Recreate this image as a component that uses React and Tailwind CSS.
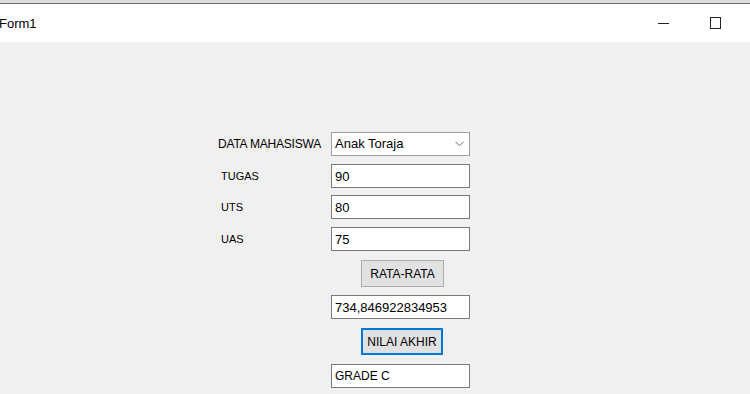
export default function App() {
  const box = "w-[139px] h-[24px] border border-[#7a7a7a] bg-white flex items-center pl-[3px] text-black leading-none";
  return (
    <div className="w-[750px] h-[394px] bg-[#f0f0f0] overflow-hidden font-['Liberation_Sans',Arial,sans-serif] text-black">
      <div className="h-[3px] bg-[#dcdcdc]" />
      <div className="h-[1px] bg-[#6a6a6a]" />
      <div className="h-[38px] bg-white flex items-center">
        <span className="ml-[-1px] text-[13px] leading-none text-black">Form1</span>
        <div className="flex-1" />
        <div className="w-[52px] h-full flex items-center justify-center">
          <div className="w-[11px] h-[1px] bg-[#222]" />
        </div>
        <div className="w-[52px] h-full flex items-center justify-center">
          <div className="w-[11px] h-[12px] border border-[#222]" />
        </div>
        <div className="w-[9px]" />
      </div>
      <div className="pt-[90px] pl-[218px] flex flex-col text-[11px]">
        <div className="flex items-center h-[24px]">
          <div className="w-[113px] text-[12px] tracking-[-0.2px]">DATA MAHASISWA</div>
          <div className="w-[139px] h-[24px] border border-[#a0a0a0] bg-white flex items-center pl-[3px] text-[13px]">
            <span className="flex-1">Anak Toraja</span>
            <svg width="9" height="6" viewBox="0 0 9 6" className="mr-[5px]">
              <path d="M0.5 0.8 L4.5 4.8 L8.5 0.8" fill="none" stroke="#666" strokeWidth="1" />
            </svg>
          </div>
        </div>
        <div className="flex items-center h-[24px] mt-[8px]">
          <div className="w-[113px] pl-[3px]">TUGAS</div>
          <div className={box + " text-[13px]"}>90</div>
        </div>
        <div className="flex items-center h-[24px] mt-[7px]">
          <div className="w-[113px] pl-[3px]">UTS</div>
          <div className={box + " text-[13px]"}>80</div>
        </div>
        <div className="flex items-center h-[24px] mt-[8px]">
          <div className="w-[113px] pl-[3px]">UAS</div>
          <div className={box + " text-[13px]"}>75</div>
        </div>
        <div className="flex mt-[9px] pl-[143px]">
          <div className="w-[83px] h-[27px] bg-[#e1e1e1] border border-[#adadad] flex items-center justify-center text-[12px]">RATA-RATA</div>
        </div>
        <div className="flex mt-[8px] pl-[113px]">
          <div className={box + " text-[13px]"}>734,846922834953</div>
        </div>
        <div className="flex mt-[9px] pl-[143px]">
          <div className="w-[82px] h-[27px] bg-[#e1e1e1] border-2 border-[#0078d7] flex items-center justify-center text-[12px]">NILAI AKHIR</div>
        </div>
        <div className="flex mt-[9px] pl-[113px]">
          <div className={box + " text-[12px]"}>GRADE C</div>
        </div>
      </div>
    </div>
  );
}
